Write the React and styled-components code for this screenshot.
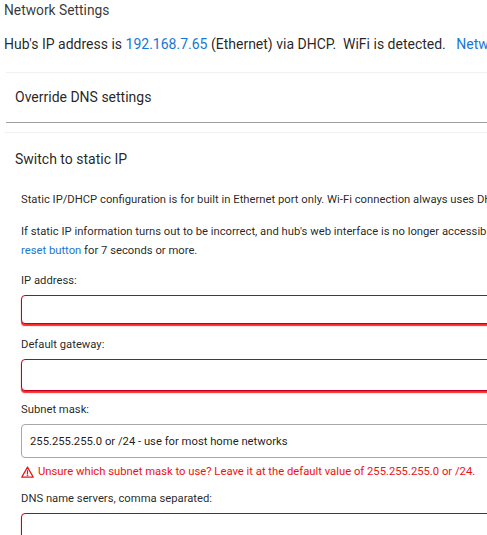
import React from "react";
import styled, { createGlobalStyle } from "styled-components";

const Global = createGlobalStyle`
  html, body {
    margin: 0;
    padding: 0;
    background: #fff;
    overflow: hidden;
  }
  body {
    font-family: Roboto, "Liberation Sans", Arial, sans-serif;
    color: rgba(0, 0, 0, 0.87);
  }
`;

const Page = styled.div`
  width: 640px;
  padding: 0 4px;
`;

const Title = styled.div`
  font-size: 13.8px;
  line-height: 20px;
  color: rgba(0, 0, 0, 0.8);
`;

const Info = styled.div`
  font-size: 14px;
  line-height: 20px;
  margin-top: 14px;
  white-space: nowrap;
`;

const Link = styled.a`
  color: #1976d2;
  text-decoration: none;
  cursor: pointer;
`;

const Panel = styled.section`
  margin-top: ${(p) => p.$gap || 0}px;
  border-top: 1px solid #f1f1f1;
  border-bottom: ${(p) => (p.$open ? "none" : "1px solid #9e9e9e")};
  margin-left: ${(p) => (p.$open ? 0 : 2)}px;
`;

const PanelHeader = styled.div`
  font-size: 14px;
  line-height: 20px;
  padding: ${(p) => (p.$open ? "16px 11px 14px" : "14px 9px 15px")};
`;

const PanelBody = styled.div`
  padding: 7px 17px 0;
  font-size: 11.25px;
  line-height: 19px;
`;

const Para = styled.p`
  margin: 0 0 ${(p) => p.$mb || 0}px;
  white-space: ${(p) => (p.$wrap ? "normal" : "nowrap")};
  max-width: ${(p) => (p.$wrap ? "540px" : "none")};
`;

const Label = styled.div`
  font-size: 11.25px;
  line-height: 18px;
  margin-top: ${(p) => p.$mt || 0}px;
  margin-bottom: 5px;
`;

const Input = styled.input`
  display: block;
  box-sizing: border-box;
  width: 100%;
  height: ${(p) => p.$h || 30}px;
  border: 1px solid ${(p) => (p.$error ? "#c2001e" : "#a8a8a8")};
  border-radius: 4px;
  box-shadow: ${(p) => (p.$error ? "0 2px 1px rgba(255, 0, 0, 0.85)" : "none")};
  padding: 0 8px;
  font-family: inherit;
  font-size: 11.25px;
  color: rgba(0, 0, 0, 0.9);
  background: #fff;
  outline: none;
`;

const Warning = styled.div`
  color: #f01010;
  font-size: 11.25px;
  line-height: 18px;
  margin-top: 5px;
  display: flex;
  align-items: center;
  gap: 4px;
  white-space: nowrap;
`;

const WarnIcon = () => (
  <svg width="13" height="12" viewBox="0 0 24 22" fill="none" stroke="currentColor" strokeWidth="2.2" strokeLinejoin="round">
    <path d="M12 2 L22.5 20.5 H1.5 Z" />
    <path d="M12 8.5 V14" strokeLinecap="round" />
    <circle cx="12" cy="17.2" r="0.6" fill="currentColor" />
  </svg>
);

export default function App() {
  return (
    <>
      <Global />
      <Page>
        <Title>Network Settings</Title>
        <Info>
          Hub's IP address is <Link>192.168.7.65</Link> (Ethernet) via DHCP.&nbsp; WiFi is detected.&nbsp;&nbsp;{" "}
          <Link>Network</Link>
        </Info>
        <Panel $gap={18}>
          <PanelHeader>Override DNS settings</PanelHeader>
        </Panel>
        <Panel $gap={9} $open>
          <PanelHeader $open>Switch to static IP</PanelHeader>
          <PanelBody>
            <Para $mb={13}>
              Static IP/DHCP configuration is for built in Ethernet port only. Wi-Fi connection always uses DHCP.
            </Para>
            <Para $wrap>
              If static IP information turns out to be incorrect, and hub's web interface is no longer accessible, press
              the <Link>reset button</Link> for 7 seconds or more.
            </Para>
            <Label $mt={12}>IP address:</Label>
            <Input $error $h={29} />
            <Label $mt={12}>Default gateway:</Label>
            <Input $error $h={32} />
            <Label $mt={10}>Subnet mask:</Label>
            <Input $h={34} defaultValue="255.255.255.0 or /24 - use for most home networks" />
            <Warning>
              <WarnIcon />
              Unsure which subnet mask to use? Leave it at the default value of 255.255.255.0 or /24.
            </Warning>
            <Label $mt={9}>DNS name servers, comma separated:</Label>
            <Input $error $h={32} />
          </PanelBody>
        </Panel>
      </Page>
    </>
  );
}
